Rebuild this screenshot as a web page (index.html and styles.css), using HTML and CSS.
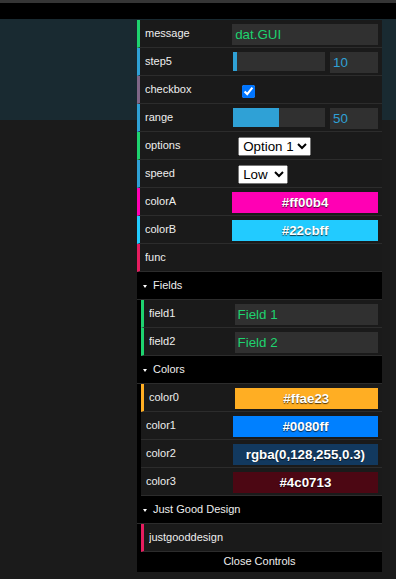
FILE: index.html
```html
<!DOCTYPE html>
<html>
<head>
<meta charset="utf-8">
<link rel="stylesheet" href="styles.css">
</head>
<body>
<div class="topline"></div>
<div class="topbar"></div>
<div class="stage"></div>

<div class="gui">
  <ul class="list">
    <li class="cr string"><span class="name">message</span><div class="c"><input class="text str" type="text" value="dat.GUI"></div></li>
    <li class="cr number"><span class="name">step5</span><div class="c"><div class="slider"><div class="slider-fg" style="width:4%"></div></div><input class="text num" type="text" value="10"></div></li>
    <li class="cr boolean"><span class="name">checkbox</span><div class="c"><input class="check" type="checkbox" checked></div></li>
    <li class="cr number"><span class="name">range</span><div class="c"><div class="slider"><div class="slider-fg" style="width:50%"></div></div><input class="text num" type="text" value="50"></div></li>
    <li class="cr string"><span class="name">options</span><div class="c"><select class="sel"><option>Option 1</option><option>Option 2</option></select></div></li>
    <li class="cr number"><span class="name">speed</span><div class="c"><select class="sel"><option>Low</option><option>High</option></select></div></li>
    <li class="cr color" style="border-left-color:#ff00b4"><span class="name">colorA</span><div class="c"><input class="text col" type="text" value="#ff00b4" style="background:#ff00b4"></div></li>
    <li class="cr color" style="border-left-color:#22cbff"><span class="name">colorB</span><div class="c"><input class="text col" type="text" value="#22cbff" style="background:#22cbff"></div></li>
    <li class="cr function"><span class="name">func</span></li>

    <li class="folder">
      <div class="title"><span class="arrow"></span>Fields</div>
      <ul class="sub">
        <li class="cr string"><span class="name">field1</span><div class="c"><input class="text str" type="text" value="Field 1"></div></li>
        <li class="cr string"><span class="name">field2</span><div class="c"><input class="text str" type="text" value="Field 2"></div></li>
      </ul>
    </li>

    <li class="folder">
      <div class="title"><span class="arrow"></span>Colors</div>
      <ul class="sub">
        <li class="cr color" style="border-left-color:#ffae23"><span class="name">color0</span><div class="c"><input class="text col" type="text" value="#ffae23" style="background:#ffae23"></div></li>
        <li class="cr color plain"><span class="name">color1</span><div class="c"><input class="text col" type="text" value="#0080ff" style="background:#0080ff"></div></li>
        <li class="cr color plain"><span class="name">color2</span><div class="c"><input class="text col" type="text" value="rgba(0,128,255,0.3)" style="background:rgba(0,128,255,0.3)"></div></li>
        <li class="cr color plain"><span class="name">color3</span><div class="c"><input class="text col" type="text" value="#4c0713" style="background:#4c0713"></div></li>
      </ul>
    </li>

    <li class="folder">
      <div class="title"><span class="arrow"></span>Just Good Design</div>
      <ul class="sub">
        <li class="cr function"><span class="name">justgooddesign</span></li>
      </ul>
    </li>
  </ul>
  <div class="close">Close Controls</div>
</div>
</body>
</html>
```

FILE: styles.css
```css
html, body {
  margin: 0;
  padding: 0;
}
body {
  background: #1b1b1b;
  font-family: "Liberation Sans", Arial, sans-serif;
  position: relative;
  height: 579px;
  overflow: hidden;
}
.topline {
  height: 3px;
  background: #353535;
}
.topbar {
  height: 16px;
  background: #000;
}
.stage {
  height: 101px;
  background: #192a31;
}

.gui {
  position: absolute;
  top: 20px;
  left: 137px;
  width: 245px;
  font: 11px "Liberation Sans", Arial, sans-serif;
  color: #eee;
}
.list, .sub {
  list-style: none;
  margin: 0;
  padding: 0;
}
.cr {
  display: flex;
  height: 27px;
  line-height: 27px;
  padding: 0 4px 0 5px;
  border-left: 3px solid transparent;
  border-bottom: 1px solid #2c2c2c;
  background: #1a1a1a;
  overflow: hidden;
}
.cr.string { border-left-color: #1ed36f; }
.cr.number { border-left-color: #2fa1d6; }
.cr.boolean { border-left-color: #806787; }
.cr.function { border-left-color: #e61d5f; }
.cr.plain { border-left: 0; }

.name {
  flex: none;
  width: 40%;
  overflow: hidden;
  white-space: nowrap;
}
.c {
  flex: none;
  width: 60%;
  position: relative;
}

.text {
  display: block;
  float: right;
  box-sizing: content-box;
  width: 100%;
  margin: 4px 0 0 0;
  padding: 3px;
  border: 0;
  outline: none;
  background: #303030;
  font: 13.333px "Liberation Sans", Arial, sans-serif;
  line-height: normal;
  height: 15px;
}
.str { color: #1ed36f; }
.num {
  color: #2fa1d6;
  width: 30%;
}
.col {
  color: #fff;
  font-weight: bold;
  text-align: center;
  text-shadow: rgba(0, 0, 0, 0.7) 0 1px 1px;
}

.slider {
  float: left;
  width: 66%;
  margin: 4px 0 0 -5px;
  height: 19px;
  background: #303030;
}
.slider-fg {
  height: 100%;
  background: #2fa1d6;
}

.check {
  display: block;
  margin: 9px 0 0 4px;
  width: 13px;
  height: 13px;
}

.sel {
  display: block;
  margin-top: 5px;
  font: 13.333px "Liberation Sans", Arial, sans-serif;
}

.folder {
  background: #000;
}
.title {
  position: relative;
  height: 27px;
  line-height: 27px;
  padding-left: 16px;
  background: #000;
  border-bottom: 1px solid #2c2c2c;
}
.arrow {
  position: absolute;
  left: 6px;
  top: 13px;
  width: 0;
  height: 0;
  border-left: 2.5px solid transparent;
  border-right: 2.5px solid transparent;
  border-top: 3px solid #fff;
}
.sub {
  padding-left: 4px;
}

.close {
  height: 20px;
  line-height: 19px;
  text-align: center;
  background: #000;
}
```
